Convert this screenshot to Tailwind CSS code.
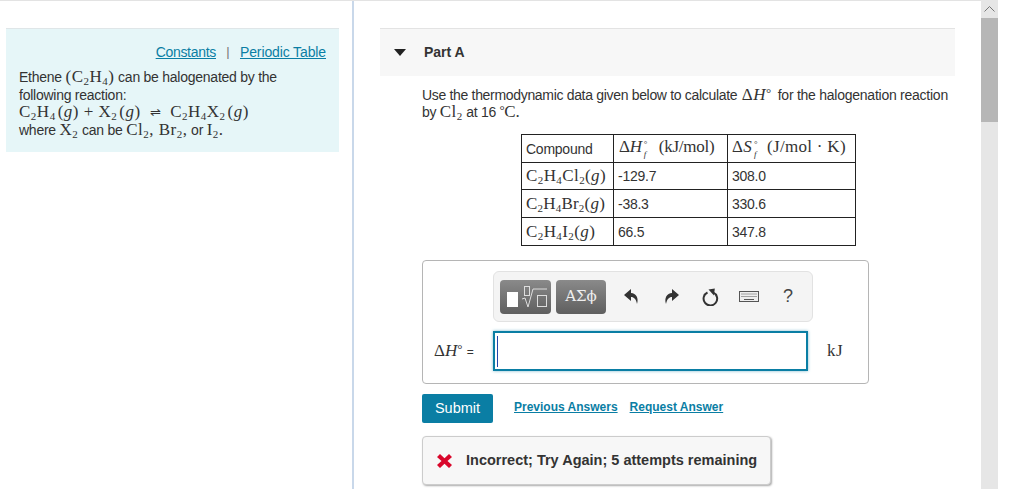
<!DOCTYPE html>
<html>
<head>
<meta charset="utf-8">
<script src="https://cdn.jsdelivr.net/npm/@tailwindcss/browser@4"></script>
</head>
<body class="bg-white">
<div class="w-[1024px] h-[489px] overflow-hidden flex font-['Liberation_Sans',sans-serif] text-[14px] text-[#333] bg-white">
  <div class="w-[981px] h-[489px] flex border-t border-[#e3e3e3] overflow-hidden shrink-0">
    <!-- left column -->
    <div class="w-[354px] shrink-0 h-full border-r-2 border-[#c9d8ea] pt-[27px] pl-[6px] pr-[13px]">
      <div class="h-[124px] bg-[#e6f6f8] border-t border-[#dfe6e8] pt-[14px] pl-[13px] pr-[13px]">
        <div class="flex justify-end h-[18px] leading-[18px] tracking-[-0.12px]">
          <a class="text-[#0a7ea4] underline tracking-[-0.3px]">Constants</a>
          <span class="text-[#777] w-[24px] text-center text-[13px]">|</span>
          <a class="text-[#0a7ea4] underline">Periodic Table</a>
        </div>
        <div class="mt-[7px] leading-[18px] text-[14px] tracking-[-0.25px]">
          <div class="h-[18px] whitespace-nowrap">Ethene <span class="font-['Liberation_Serif',serif] text-[17px] tracking-[0.5px]">(C<sub class="text-[11px] static align-[-3px]">2</sub>H<sub class="text-[11px] static align-[-3px]">4</sub>)</span> can be halogenated by the</div>
          <div class="h-[18px]">following reaction:</div>
          <div class="h-[17px] leading-[15px] font-['Liberation_Serif',serif] text-[17px] tracking-[0.5px] whitespace-nowrap">C<sub class="text-[11px] static align-[-3px]">2</sub>H<sub class="text-[11px] static align-[-3px]">4</sub><span class="ml-[2px]">(<i>g</i>)</span> + X<sub class="text-[11px] static align-[-3px]">2</sub><span class="ml-[2px]">(<i>g</i>)</span><span class="mx-[9px] text-[13px]">⇌</span>C<sub class="text-[11px] static align-[-3px]">2</sub>H<sub class="text-[11px] static align-[-3px]">4</sub>X<sub class="text-[11px] static align-[-3px]">2</sub><span class="ml-[2px]">(<i>g</i>)</span></div>
          <div class="h-[18px] whitespace-nowrap">where <span class="font-['Liberation_Serif',serif] text-[17px] tracking-[0.5px]">X<sub class="text-[11px] static align-[-3px]">2</sub></span> can be <span class="font-['Liberation_Serif',serif] text-[17px] tracking-[0.5px]">Cl<sub class="text-[11px] static align-[-3px]">2</sub>, Br<sub class="text-[11px] static align-[-3px]">2</sub>,</span> or <span class="font-['Liberation_Serif',serif] text-[17px] tracking-[0.5px]">I<sub class="text-[11px] static align-[-3px]">2</sub>.</span></div>
        </div>
      </div>
    </div>
    <!-- right column -->
    <div class="flex-1 pt-[27px] pl-[26px] min-w-0">
      <div class="w-[575px] h-[48px] bg-[#f7f7f7] border-t border-[#e3e3e3] flex items-center">
        <svg class="ml-[14px]" width="12" height="7" viewBox="0 0 12 7"><path d="M0 0H12L6 7Z" fill="#222"/></svg>
        <span class="ml-[18px] font-bold text-[#333] text-[14px]">Part A</span>
      </div>
      <div class="ml-[42px] mt-[9px] w-[540px] leading-[16px] text-[14px] tracking-[-0.32px] h-[39px]">
        <div class="whitespace-nowrap h-[17px]">Use the thermodynamic data given below to calculate <span class="font-['Liberation_Serif',serif] text-[17px] ml-[1px] mr-[6px] tracking-[0.5px]">Δ<i>H</i><span class="text-[13px] align-[3px]">°</span></span><span class="tracking-[-0.25px]">for the halogenation reaction</span></div>
        <div class="whitespace-nowrap">by <span class="font-['Liberation_Serif',serif] text-[17px] tracking-[0.5px]">Cl<sub class="text-[11px] static align-[-3px]">2</sub></span> at 16 <span class="font-['Liberation_Serif',serif] text-[17px]"><span class="text-[13px] align-[3px]">°</span>C.</span></div>
      </div>
      <table class="ml-[141px] mt-[10px] border-collapse border border-[#333] text-[14px] tracking-[-0.25px] leading-[18px] table-fixed w-[334px]">
        <colgroup><col class="w-[92px]"><col class="w-[114px]"><col class="w-[128px]"></colgroup>
        <tr class="h-[28px]">
          <td class="border border-[#222] px-[4px] whitespace-nowrap">Compound</td>
          <td class="border border-[#222] pl-[5px] pr-0 whitespace-nowrap font-['Liberation_Serif',serif] text-[17px]">Δ<i>H</i><span class="ml-[2px] inline-flex flex-col align-middle text-[9px] leading-[10px] w-[9px]"><span>°</span><i>f</i></span><span class="ml-[6px]">(kJ/mol)</span></td>
          <td class="border border-[#222] px-[4px] whitespace-nowrap font-['Liberation_Serif',serif] text-[17px] tracking-[0.3px]">Δ<i>S</i><span class="ml-[2px] inline-flex flex-col align-middle text-[9px] leading-[10px] w-[9px]"><span>°</span><i>f</i></span><span class="ml-[4px]">(J/mol · K)</span></td>
        </tr>
        <tr class="h-[27px]">
          <td class="border border-[#222] px-[4px] whitespace-nowrap font-['Liberation_Serif',serif] text-[17px] tracking-[0.4px]">C<sub class="text-[11px] static align-[-3px]">2</sub>H<sub class="text-[11px] static align-[-3px]">4</sub>Cl<sub class="text-[11px] static align-[-3px]">2</sub>(<i>g</i>)</td>
          <td class="border border-[#222] px-[4px]">-129.7</td>
          <td class="border border-[#222] px-[4px]">308.0</td>
        </tr>
        <tr class="h-[28px]">
          <td class="border border-[#222] px-[4px] whitespace-nowrap font-['Liberation_Serif',serif] text-[17px] tracking-[0.2px]">C<sub class="text-[11px] static align-[-3px]">2</sub>H<sub class="text-[11px] static align-[-3px]">4</sub>Br<sub class="text-[11px] static align-[-3px]">2</sub>(<i>g</i>)</td>
          <td class="border border-[#222] px-[4px]">-38.3</td>
          <td class="border border-[#222] px-[4px]">330.6</td>
        </tr>
        <tr class="h-[28px]">
          <td class="border border-[#222] px-[4px] whitespace-nowrap font-['Liberation_Serif',serif] text-[17px] tracking-[0.4px]">C<sub class="text-[11px] static align-[-3px]">2</sub>H<sub class="text-[11px] static align-[-3px]">4</sub>I<sub class="text-[11px] static align-[-3px]">2</sub>(<i>g</i>)</td>
          <td class="border border-[#222] px-[4px]">66.5</td>
          <td class="border border-[#222] px-[4px]">347.8</td>
        </tr>
      </table>
      <!-- answer box -->
      <div class="ml-[42px] mt-[14px] w-[447px] h-[124px] border border-[#b5b5b5] rounded-[4px] flex flex-col">
        <div class="ml-[70px] mt-[10px] w-[320px] h-[51px] bg-[#f4f4f4] border border-[#e2e2e2] rounded-[6px] flex items-center pl-[6px]">
          <div class="w-[51px] h-[34px] rounded-[4px] bg-gradient-to-b from-[#8a8a8a] to-[#5f5f5f]">
            <svg width="51" height="34" viewBox="0 0 51 34">
              <rect x="7" y="12" width="11" height="15" fill="#fff"/>
              <rect x="24.5" y="6.5" width="5" height="9" fill="none" stroke="#ddd"/>
              <path d="M22 19L25 18L28 27L33 9H47" fill="none" stroke="#ddd"/>
              <rect x="37.5" y="15.5" width="9" height="11" fill="none" stroke="#ddd"/>
            </svg>
          </div>
          <div class="ml-[5px] w-[50px] h-[34px] rounded-[4px] bg-gradient-to-b from-[#8a8a8a] to-[#5f5f5f] flex items-center justify-center text-[#eee] font-['DejaVu_Serif',serif] text-[15px]">ΑΣϕ</div>
          <svg class="ml-[18px]" width="15" height="15" viewBox="0 0 15 15"><path d="M7 0L0 6L7 12V8C10 8 12 10 13 15C15 9 12 4 7 4Z" fill="#333"/></svg>
          <svg class="ml-[25px]" width="15" height="15" viewBox="0 0 15 15"><path d="M8 0L15 6L8 12V8C5 8 3 10 2 15C0 9 3 4 8 4Z" fill="#333"/></svg>
          <svg class="ml-[23px]" width="17" height="18" viewBox="0 0 17 18"><path d="M5.5 4.5A6.8 6.8 0 1 0 11 4.4" fill="none" stroke="#333" stroke-width="2"/><path d="M6.5 1.5L12.8 0.5L12 7.5Z" fill="#333"/></svg>
          <svg class="ml-[20px]" width="20" height="11" viewBox="0 0 20 11"><rect x="0.5" y="0.5" width="19" height="10" fill="#eee" stroke="#555"/><path d="M2.5 3H17.5M2.5 5.5H17.5" stroke="#555" stroke-dasharray="1 1"/><path d="M5 8.5H15" stroke="#555"/></svg>
          <span class="ml-[24px] text-[18px] text-[#444]">?</span>
        </div>
        <div class="mt-[9px] flex items-center h-[40px]">
          <div class="ml-[11px] w-[59px] font-['Liberation_Serif',serif] text-[17px] whitespace-nowrap">Δ<i>H</i><span class="text-[13px] align-[3px]">°</span> <span class="font-['Liberation_Sans',sans-serif] text-[12px]">=</span></div>
          <div class="w-[315px] h-[40px] border-2 border-[#0a7ea4] shadow-[0_0_3px_#7fb9cd] flex items-center pl-[2px]"><div class="w-px h-[31px] bg-[#2244aa]"></div></div>
          <div class="ml-[19px] font-['Liberation_Serif',serif] text-[17px] tracking-[0.5px]">kJ</div>
        </div>
      </div>
      <div class="ml-[42px] mt-[10px] flex items-center">
        <div class="w-[71px] h-[29px] bg-[#0a7ea4] rounded-[2px] text-white flex items-center justify-center text-[14.5px]">Submit</div>
        <a class="ml-[21px] text-[#0a7ea4] underline font-bold text-[12px] mt-[-3px]">Previous Answers</a>
        <a class="ml-[12px] text-[#0a7ea4] underline font-bold text-[12px] mt-[-3px]">Request Answer</a>
      </div>
      <div class="ml-[42px] mt-[13px] w-[349px] h-[49px] bg-[#f7f7f7] border border-[#ccc] rounded-[4px] shadow-[1px_1px_2px_#aaa] flex items-center pl-[14px]">
        <svg width="15" height="14" viewBox="0 0 15 14"><path d="M3 0L7.5 4.2L12 0L15 3L10.5 7L15 11L12 14L7.5 9.8L3 14L0 11L4.5 7L0 3Z" fill="#d9072b"/></svg>
        <span class="ml-[14px] font-bold text-[14.5px] whitespace-nowrap text-[#333]">Incorrect; Try Again; 5 attempts remaining</span>
      </div>
    </div>
  </div>
  <!-- scrollbar -->
  <div class="w-[17px] h-[489px] bg-[#e6e6e6] flex flex-col shrink-0">
    <div class="h-[18px] flex items-center justify-center"><svg width="11" height="6" viewBox="0 0 11 6"><path d="M0.5 5.5L5.5 0.5L10.5 5.5" fill="none" stroke="#777"/></svg></div>
    <div class="h-[104px] bg-[#b6b6b6]"></div>
  </div>
  <div class="flex-1 bg-white"></div>
</div>
</body>
</html>
